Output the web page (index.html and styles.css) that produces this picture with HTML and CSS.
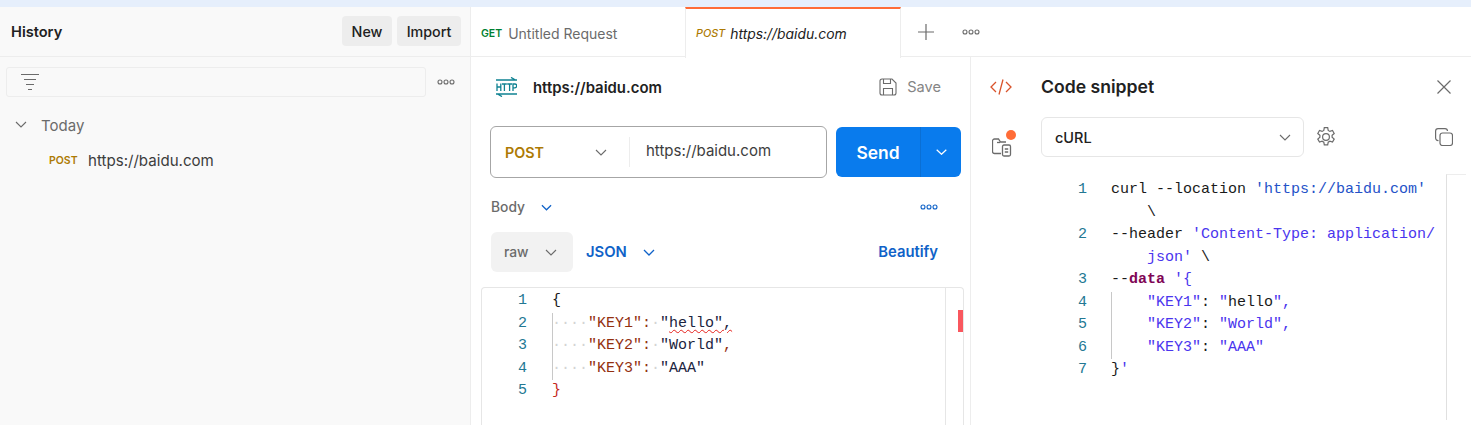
FILE: index.html
```html
<!DOCTYPE html>
<html lang="en">
<head>
<meta charset="utf-8">
<title>History</title>
<link rel="stylesheet" href="styles.css">
</head>
<body>
<div class="topstrip"></div>
<div class="app">
  <aside class="sidebar">
    <header class="side-head">
      <h2 class="side-title">History</h2>
      <div class="side-actions">
        <button class="btn btn-new">New</button>
        <button class="btn btn-import">Import</button>
      </div>
    </header>
    <div class="filter-row">
      <div class="filter-box">
        <svg class="filter-icon" width="18" height="16" viewBox="0 0 18 16" fill="none" stroke="#6b6b6b" stroke-width="1"><path d="M0 .5h18M3 5.500h12M5 10.500h8M7 15.500h4"/></svg>
      </div>
      <svg class="dots" width="18" height="6" viewBox="0 0 18 6" fill="none" stroke="#6b6b6b" stroke-width="1.100"><circle cx="3" cy="3" r="2"/><circle cx="9" cy="3" r="2"/><circle cx="15" cy="3" r="2"/></svg>
    </div>
    <div class="group">
      <svg width="12" height="7" viewBox="0 0 12 7" fill="none" stroke="#6b6b6b" stroke-width="1.100"><path d="M1 1l5 5 5-5"/></svg>
      <span class="group-label">Today</span>
    </div>
    <div class="hist-item"><span class="hist-method">POST</span><span class="hist-url">https://baidu.com</span></div>
  </aside>

  <div class="workspace">
    <nav class="tabs">
      <div class="tab"><span class="tab-get">GET</span><span class="tab-name">Untitled Request</span></div>
      <div class="tab tab-active"><span class="tab-post">POST</span><span class="tab-name-active">https://baidu.com</span></div>
      <svg class="tab-plus" width="16" height="16" viewBox="0 0 16 16" fill="none" stroke="#6b6b6b" stroke-width="1.200"><path d="M8 0v16M0 8h16"/></svg>
      <svg class="tab-dots" width="18" height="6" viewBox="0 0 18 6" fill="none" stroke="#6b6b6b" stroke-width="1.100"><circle cx="3" cy="3" r="2"/><circle cx="9" cy="3" r="2"/><circle cx="15" cy="3" r="2"/></svg>
    </nav>
    <div class="panes">
      <main class="request">
        <div class="req-head">
          <svg class="http-icon" width="21" height="20" viewBox="0 0 21 20" fill="none" stroke="#0f8292" stroke-width="1.300">
            <path d="M0 3h21M15 .4l4.500 2.600M0 17h21M1.500 17l4.500 2.600"/>
            <path d="M1 6.500v7.500M4.800 6.500v7.500M1 10h3.800M6 7h4.800M8.400 7v7M11.200 7h4.800M13.600 7v7"/>
            <path d="M17 14V7h1.800a1.800 1.800 0 0 1 0 3.800H17"/>
          </svg>
          <span class="req-title">https://baidu.com</span>
          <span class="save">
            <svg width="18" height="18" viewBox="0 0 18 18" fill="none" stroke="#6b6b6b" stroke-width="1.100"><path d="M1 3a2 2 0 0 1 2-2h10l4 4v10a2 2 0 0 1-2 2H3a2 2 0 0 1-2-2z"/><path d="M4.500 1v4.500h7V1M4.500 17v-6.500h9V17"/></svg>
            <span>Save</span>
          </span>
        </div>
        <div class="url-row">
          <div class="url-box">
            <span class="url-method">POST</span>
            <svg class="url-chev" width="12" height="7" viewBox="0 0 12 7" fill="none" stroke="#6b6b6b" stroke-width="1.100"><path d="M1 1l5 5 5-5"/></svg>
            <span class="url-div"></span>
            <span class="url-text">https://baidu.com</span>
          </div>
          <div class="send">
            <span class="send-label">Send</span>
            <span class="send-more"><svg width="11" height="6" viewBox="0 0 11 6" fill="none" stroke="#fff" stroke-width="1.200"><path d="M.7.700l4.800 4.600L10.300.700"/></svg></span>
          </div>
        </div>
        <div class="body-row">
          <span class="body-label">Body</span>
          <svg width="11" height="7" viewBox="0 0 12 7" fill="none" stroke="#0f62c8" stroke-width="1.300"><path d="M1 1l5 5 5-5"/></svg>
          <svg class="body-dots" width="18" height="6" viewBox="0 0 18 6" fill="none" stroke="#0f62c8" stroke-width="1.100"><circle cx="3" cy="3" r="2"/><circle cx="9" cy="3" r="2"/><circle cx="15" cy="3" r="2"/></svg>
        </div>
        <div class="format-row">
          <div class="raw"><span>raw</span><svg width="12" height="7" viewBox="0 0 12 7" fill="none" stroke="#6b6b6b" stroke-width="1.100"><path d="M1 1l5 5 5-5"/></svg></div>
          <span class="json">JSON</span>
          <svg class="json-chev" width="12" height="7" viewBox="0 0 12 7" fill="none" stroke="#0f62c8" stroke-width="1.300"><path d="M1 1l5 5 5-5"/></svg>
          <span class="beautify">Beautify</span>
        </div>
        <div class="editor">
          <div class="gutter"><div>1</div><div>2</div><div>3</div><div>4</div><div>5</div></div>
          <div class="code">
            <div class="line"><span class="b-err">{</span></div>
            <div class="guide">
              <div class="line"><span class="ws">····</span><span class="k">"KEY1"</span><span class="p">:</span><span class="ws">·</span><span class="v">"</span><span class="v squig">hello",</span></div>
              <div class="line"><span class="ws">····</span><span class="k">"KEY2"</span><span class="p">:</span><span class="ws">·</span><span class="v">"World"</span><span class="p">,</span></div>
              <div class="line"><span class="ws">····</span><span class="k">"KEY3"</span><span class="p">:</span><span class="ws">·</span><span class="v">"AAA"</span></div>
            </div>
            <div class="line"><span class="b-end">}</span></div>
          </div>
          <div class="overview"><span class="err-mark"></span></div>
        </div>
      </main>

      <section class="snippet">
        <div class="rail">
          <svg class="rail-code" width="22" height="16" viewBox="0 0 22 16" fill="none" stroke="#d9532b" stroke-width="1.300"><path d="M6 3L1 8l5 5M16 3l5 5-5 5M13 .5L9 15.500"/></svg>
          <span class="rail-doc">
            <svg width="20" height="19" viewBox="0 0 20 19" fill="none" stroke="#6b6b6b" stroke-width="1.300"><path d="M9 15.500H2.500a2 2 0 0 1-2-2V3a2 2 0 0 1 2-2h4l2 3h5.500"/><path d="M5 4.500h3"/><rect x="10.500" y="7" width="8" height="11" rx="1.500"/><path d="M12.800 11h3.400M12.800 14h3.400"/></svg>
            <i class="rail-dot"></i>
          </span>
        </div>
        <div class="snip-main">
          <div class="snip-head">
            <h2 class="snip-title">Code snippet</h2>
            <svg width="14" height="14" viewBox="0 0 14 14" fill="none" stroke="#6b6b6b" stroke-width="1.200"><path d="M.5.500l13 13M13.500.500l-13 13"/></svg>
          </div>
          <div class="snip-tools">
            <div class="lang"><span>cURL</span><svg width="12" height="7" viewBox="0 0 12 7" fill="none" stroke="#6b6b6b" stroke-width="1.100"><path d="M1 1l5 5 5-5"/></svg></div>
            <svg class="gear" width="20" height="20" viewBox="0 0 20 20" fill="none" stroke="#6b6b6b" stroke-width="1.200"><circle cx="10" cy="10" r="3.400"/><path d="M8.300.7h3.400l.5 2.700 1.700 1 2.600-.9 1.700 3-2.100 1.800v2l2.100 1.800-1.700 3-2.600-.9-1.700 1-.5 2.700H8.300l-.5-2.700-1.700-1-2.600.9-1.700-3 2.100-1.800v-2L1.800 6.500l1.700-3 2.600.9 1.700-1z"/></svg>
            <svg class="copy" width="18" height="18" viewBox="0 0 18 18" fill="none" stroke="#6b6b6b" stroke-width="1.200"><rect x="5" y="5" width="12.500" height="12.500" rx="2.500"/><path d="M3.500 12.500A2.500 2.500 0 0 1 .6 10V3A2.500 2.500 0 0 1 3 .6h7a2.500 2.500 0 0 1 2.500 2.400"/></svg>
          </div>
          <div class="snip-code">
            <div class="snip-lines">
              <div class="row"><span class="num">1</span><span class="txt">curl --location <span class="u">'https://baidu.com'</span></span></div>
              <div class="row"><span class="num"></span><span class="txt wrap">\</span></div>
              <div class="row"><span class="num">2</span><span class="txt">--header <span class="s">'Content-Type: application/</span></span></div>
              <div class="row"><span class="num"></span><span class="txt wrap"><span class="s">json'</span> \</span></div>
              <div class="row"><span class="num">3</span><span class="txt">--<b class="kw">data</b> <span class="s">'{</span></span></div>
              <div class="row"><span class="num">4</span><span class="txt ind"><span class="s">"KEY1"</span>: <span class="s">"</span>hello<span class="s">",</span></span></div>
              <div class="row"><span class="num">5</span><span class="txt ind"><span class="s">"KEY2"</span>: <span class="s">"World",</span></span></div>
              <div class="row"><span class="num">6</span><span class="txt ind"><span class="s">"KEY3"</span>: <span class="s">"AAA"</span></span></div>
              <div class="row"><span class="num">7</span><span class="txt"><span class="b-end2">}</span><span class="s">'</span></span></div>
            </div>
            <div class="snip-side"></div>
          </div>
        </div>
      </section>
    </div>
  </div>
</div>
</body>
</html>
```
FILE: styles.css
```css
* { box-sizing: border-box; }
html, body { margin: 0; padding: 0; height: 100%; overflow: hidden; }
body { font-family: Inter, "Liberation Sans", sans-serif; font-size: 14.3px; color: #212121; background: #fff; }
h2 { margin: 0; font: inherit; }
button { font: inherit; border: 0; }
svg { display: block; flex: none; }

.topstrip { height: 7px; background: #e6effc; }
.app { display: flex; height: 418px; }

/* Sidebar */
.sidebar { width: 471px; flex: none; background: #f9f9f9; border-right: 1px solid #ededed; }
.side-head { height: 50px; display: flex; align-items: center; justify-content: space-between; padding: 0 9px 1px 11px; border-bottom: 1px solid #ededed; }
.side-title { font-weight: 600; font-size: 14.6px; color: #212121; margin-top: 2px; }
.side-actions { display: flex; gap: 5px; }
.btn { height: 30px; background: #ededed; color: #212121; font-weight: 500; font-size: 14.3px; border-radius: 4px; padding: 0; }
.btn-new { width: 50px; }
.btn-import { width: 64px; }
.filter-row { display: flex; align-items: center; padding: 10px 15px 0 6px; }
.filter-box { width: 420px; height: 30px; border: 1px solid #ededed; border-radius: 3px; padding: 6px 0 0 14px; }
.dots { margin-left: 11px; }
.group { display: flex; align-items: center; gap: 14px; margin: 16px 0 0 15px; height: 22px; }
.group-label { font-size: 15px; color: #6b6b6b; padding-top: 2px; }
.hist-item { display: flex; align-items: center; margin: 14px 0 0 49px; height: 22px; }
.hist-method { width: 39px; font-size: 10.5px; font-weight: 600; color: #ad7a03; }
.hist-url { font-size: 15.1px; color: #3d3d3d; }

/* Tabs */
.workspace { flex: 1; min-width: 0; display: flex; flex-direction: column; }
.tabs { height: 50px; flex: none; display: flex; align-items: center; border-bottom: 1px solid #ededed; }
.tab { width: 214px; height: 50px; display: flex; align-items: center; padding: 4px 0 0 10px; font-size: 14px; }
.tab-active { width: 216px; margin-bottom: -1px; height: 51px; background: #fff; border-left: 1px solid #ededed; border-right: 1px solid #ededed; border-top: 2px solid #ff6c37; padding-left: 10px; padding-top: 0; align-self: flex-start; font-style: italic; }
.tab-get { font-size: 10.5px; font-weight: 600; color: #007f31; margin-right: 6px; }
.tab-post { font-size: 10.8px; font-weight: 500; color: #ad7a03; margin-right: 5px; }
.tab-name { color: #6b6b6b; }
.tab-name-active { color: #212121; font-size: 13.9px; }
.tab-plus { margin-left: 17px; }
.tab-dots { margin-left: 28px; }

.panes { flex: 1; min-height: 0; display: flex; }

/* Request pane */
.request { width: 500px; flex: none; border-right: 1px solid #ededed; padding-left: 19px; display: flex; flex-direction: column; }
.req-head { height: 60px; display: flex; align-items: center; padding: 0 29px 0 6px; }
.http-icon { margin-right: 16px; }
.req-title { font-weight: 600; font-size: 14.9px; color: #212121; flex: 1; padding-top: 2px; }
.save { display: flex; align-items: center; gap: 10px; color: #858585; font-size: 14.6px; }
.url-row { display: flex; gap: 9px; height: 52px; margin-top: 9px; }
.url-box { width: 337px; height: 52px; border: 1px solid #a6a6a6; border-radius: 6px; display: flex; align-items: center; padding-left: 14px; }
.url-method { width: 90px; font-weight: 600; font-size: 14.3px; color: #ad7a03; }
.url-chev { margin-right: 22px; }
.url-div { width: 1px; height: 30px; background: #ededed; margin-right: 16px; }
.url-text { color: #3d3d3d; font-size: 15px; margin-top: -3px; }
.send { width: 125px; height: 50px; margin-top: 1px; background: #097bed; border-radius: 6px; color: #fff; display: flex; align-items: center; }
.send-label { width: 84px; padding-left: 20.5px; font-weight: 600; font-size: 17.4px; }
.send-more { flex: 1; height: 100%; display: flex; align-items: center; justify-content: center; border-left: 1px solid #0a6fd4; }
.body-row { display: flex; align-items: center; margin-top: 18px; height: 22px; padding-right: 32px; }
.body-label { font-weight: 500; font-size: 13.8px; color: #6b6b6b; margin: 0 16px 0 1px; }
.body-dots { margin-left: auto; }
.format-row { display: flex; align-items: center; margin-top: 14px; height: 40px; padding: 0 32px 0 1px; }
.raw { width: 82px; height: 40px; background: #f2f2f2; border-radius: 6px; display: flex; align-items: center; justify-content: space-between; padding: 0 16px 0 13px; color: #6b6b6b; font-size: 13.8px; font-weight: 500; }
.json { margin-left: 13px; color: #0f62c8; font-weight: 600; font-size: 14.8px; }
.json-chev { margin-left: 16px; }
.beautify { margin-left: auto; color: #0f62c8; font-weight: 600; font-size: 14.8px; }

.editor { position: relative; display: flex; margin: 15px 6px 0 -9px; flex: 1; min-height: 0; border: 1px solid #e6e6e6; border-bottom: 0; border-radius: 4px 4px 0 0; font-family: "Liberation Mono", monospace; font-size: 15px; line-height: 22.5px; padding-top: 2px; overflow: hidden; }
.gutter { width: 45px; flex: none; text-align: right; color: #237893; }
.code { margin-left: 25px; flex: 1; }
.line { height: 22.5px; white-space: pre; }
.guide { border-left: 1px solid #c8c8c8; }
.guide .line { margin-left: -1px; }
.ws { color: #d4d4d4; }
.k { color: #93300f; }
.p { color: #93300f; }
.v { color: #1c2440; }
.b-err { color: #1a1a1a; }
.b-end { color: #c4261d; }
.squig { text-decoration: underline wavy #e5201b 1.2px; text-underline-offset: 2px; }
.overview { position: absolute; top: 0; right: 0; bottom: 0; width: 18px; border-left: 1px solid #e6e6e6; }
.err-mark { position: absolute; left: 12px; top: 22px; width: 5px; height: 22px; background: #f9575e; }

/* Snippet pane */
.snippet { flex: 1; min-width: 0; display: flex; }
.rail { width: 70px; flex: none; display: flex; flex-direction: column; padding: 22px 0 0 19px; }
.rail-doc { position: relative; display: block; margin: 43px 0 0 2px; width: 20px; }
.rail-dot { position: absolute; top: -8px; left: 14px; width: 10px; height: 10px; border-radius: 50%; background: #ff6c37; }
.snip-main { flex: 1; min-width: 0; display: flex; flex-direction: column; }
.snip-head { height: 60px; display: flex; align-items: center; justify-content: space-between; padding: 0 20px 0 0; }
.snip-title { font-weight: 600; font-size: 17.6px; color: #212121; margin-top: -2px; }
.snip-tools { display: flex; align-items: center; height: 40px; padding-right: 18px; }
.lang { width: 263px; height: 40px; border: 1px solid #e6e6e6; border-radius: 6px; display: flex; align-items: center; justify-content: space-between; padding: 0 12px 0 13px; font-weight: 500; font-size: 14.5px; color: #212121; }
.gear { margin-left: 12px; }
.copy { margin-left: auto; }
.snip-code { flex: 1; min-height: 0; display: flex; margin-top: 22px; }
.snip-lines { width: 405px; flex: none; font-family: "Liberation Mono", monospace; font-size: 15px; line-height: 22.5px; }
.row { height: 22.5px; display: flex; white-space: pre; }
.num { flex: none; width: 70px; padding-left: 37px; color: #237893; }
.txt { display: block; color: #1a1a1a; }
.wrap { padding-left: 36px; }
.ind { padding-left: 35px; border-left: 1px solid #c8c8c8; }
.u { color: #2452c8; }
.s { color: #4a35ee; }
.kw { color: #800555; font-weight: 700; }
.b-end2 { color: #1a1a1a; }
.snip-side { width: 20px; border-left: 1px solid #e0e0e0; border-top: 1px solid #ededed; height: 100%; margin-top: -5px; }
```
